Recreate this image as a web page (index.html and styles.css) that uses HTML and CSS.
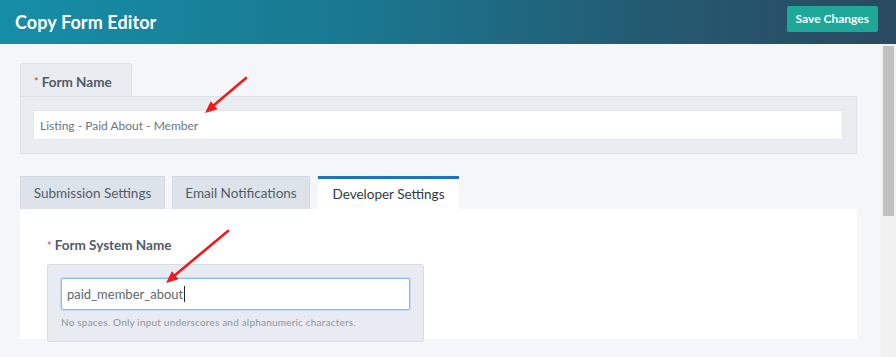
FILE: index.html
```
<!DOCTYPE html>
<html>
<head>
<meta charset="utf-8">
<title>Copy Form Editor</title>
<link rel="stylesheet" href="styles.css">
</head>
<body>
<div class="app">
  <header class="topbar">
    <h1 class="title">Copy Form Editor</h1>
    <button class="save-btn">Save Changes</button>
  </header>
  <div class="below">
    <main class="main">
      <section class="name-block">
        <div class="name-tab"><span class="req">*</span> Form Name</div>
        <div class="name-panel">
          <div class="field">Listing - Paid About - Member</div>
        </div>
      </section>
      <nav class="tabs">
        <div class="tab tab-sub">Submission Settings</div>
        <div class="tab tab-email">Email Notifications</div>
        <div class="tab tab-dev active">Developer Settings</div>
      </nav>
      <section class="tab-body">
        <div class="sys-label"><span class="req">*</span> Form System Name</div>
        <div class="sys-box">
          <div class="field focused">paid_member_about<span class="caret"></span></div>
          <div class="help">No spaces. Only input underscores and alphanumeric characters.</div>
        </div>
      </section>
    </main>
    <div class="scrollbar"><div class="thumb"></div></div>
  </div>
  <svg class="arrows" width="896" height="357" viewBox="0 0 896 357">
    <line x1="246" y1="78" x2="213" y2="106" stroke="#ec1c1c" stroke-width="2.6" stroke-linecap="round"/>
    <polygon points="205,113 217.6,109.2 210.8,101.2" fill="#ec1c1c"/>
    <line x1="228" y1="231" x2="174" y2="276" stroke="#ec1c1c" stroke-width="2.6" stroke-linecap="round"/>
    <polygon points="166,283 178.6,279.3 171.8,271.3" fill="#ec1c1c"/>
  </svg>
</div>
</body>
</html>
```
FILE: styles.css
```
* { box-sizing: border-box; }
html, body { margin: 0; padding: 0; }
body {
  font-family: "Lato", "Open Sans", sans-serif;
  background: #f5f6fa;
  overflow: hidden;
}
.app {
  position: relative;
  width: 896px;
  height: 357px;
  overflow: hidden;
}
.topbar {
  height: 44px;
  display: flex;
  align-items: center;
  justify-content: space-between;
  padding: 0 18px 0 15px;
  background: linear-gradient(90deg, #168ea8 0%, #1a7790 40%, #24586f 75%, #2a4a60 100%);
}
.title {
  margin: 0;
  color: #ffffff;
  font-size: 18px;
  font-weight: 700;
  letter-spacing: 0.1px;
}
.save-btn {
  height: 26px;
  margin-top: -7px;
  padding: 0 9px;
  border: none;
  border-radius: 2px;
  background: #1ea897;
  color: #ffffff;
  font-family: inherit;
  font-size: 12px;
  font-weight: 700;
}
.below {
  display: flex;
  height: 313px;
}
.main {
  flex: 1;
  padding: 19px 24px 0 20px;
}
.scrollbar {
  width: 15px;
  background: #f1f1f1;
  padding: 2px 2px 0 2px;
}
.thumb {
  height: 170px;
  background: #c1c1c1;
}
.req {
  color: #d0453f;
  font-size: 11px;
  font-weight: 400;
  vertical-align: 2px;
}
.name-tab {
  width: 112px;
  height: 33px;
  padding: 3px 0 0 13px;
  display: flex;
  align-items: center;
  gap: 3px;
  background: #e9ecf1;
  border: 1px solid #dde1e8;
  border-bottom: none;
  border-radius: 3px 3px 0 0;
  color: #515b6a;
  font-size: 13.5px;
  font-weight: 700;
}
.name-panel {
  background: #e9ecf1;
  border: 1px solid #dde1e8;
  padding: 13px 13px 13px 12px;
}
.field {
  height: 30px;
  display: flex;
  align-items: center;
  padding: 0 6px;
  background: #ffffff;
  border: 1px solid #e3e6eb;
  border-radius: 2px;
  color: #6d7480;
  font-size: 12px;
}
.tabs {
  display: flex;
  margin-top: 22px;
  height: 33px;
  align-items: flex-end;
}
.tab {
  height: 33px;
  display: flex;
  align-items: center;
  justify-content: center;
  background: #dce3ea;
  border: 1px solid #d3dae3;
  border-bottom: none;
  color: #535d69;
  font-size: 13.5px;
}
.tab-sub { width: 145px; }
.tab-email { width: 138px; margin-left: 7px; }
.tab-dev { width: 141px; margin-left: 8px; }
.tab.active {
  background: #ffffff;
  border: none;
  border-top: 3px solid #1b74bd;
  color: #2f3a46;
}
.tab-body {
  background: #ffffff;
  height: 130px;
  padding: 28px 0 0 27px;
}
.sys-label {
  display: flex;
  align-items: center;
  gap: 3px;
  color: #515b6a;
  font-size: 13.5px;
  font-weight: 700;
  height: 16px;
}
.sys-box {
  margin-top: 11px;
  width: 377px;
  height: 78px;
  padding: 13px 13px 0 13px;
  background: #e8ecf2;
  border: 1px solid #d8dde5;
  border-radius: 3px;
}
.field.focused {
  height: 32px;
  border: 1px solid #82bdf5;
  box-shadow: 0 0 0 1px rgba(130, 189, 245, 0.35);
  color: #5f6773;
  font-size: 13px;
  padding: 0 5px;
}
.caret {
  display: inline-block;
  width: 1px;
  height: 16px;
  background: #222;
  margin-left: 1px;
}
.help {
  margin-top: 6px;
  color: #8b939e;
  font-size: 10px;
  letter-spacing: 0.2px;
}
.arrows {
  position: absolute;
  left: 0;
  top: 0;
  pointer-events: none;
}
```
